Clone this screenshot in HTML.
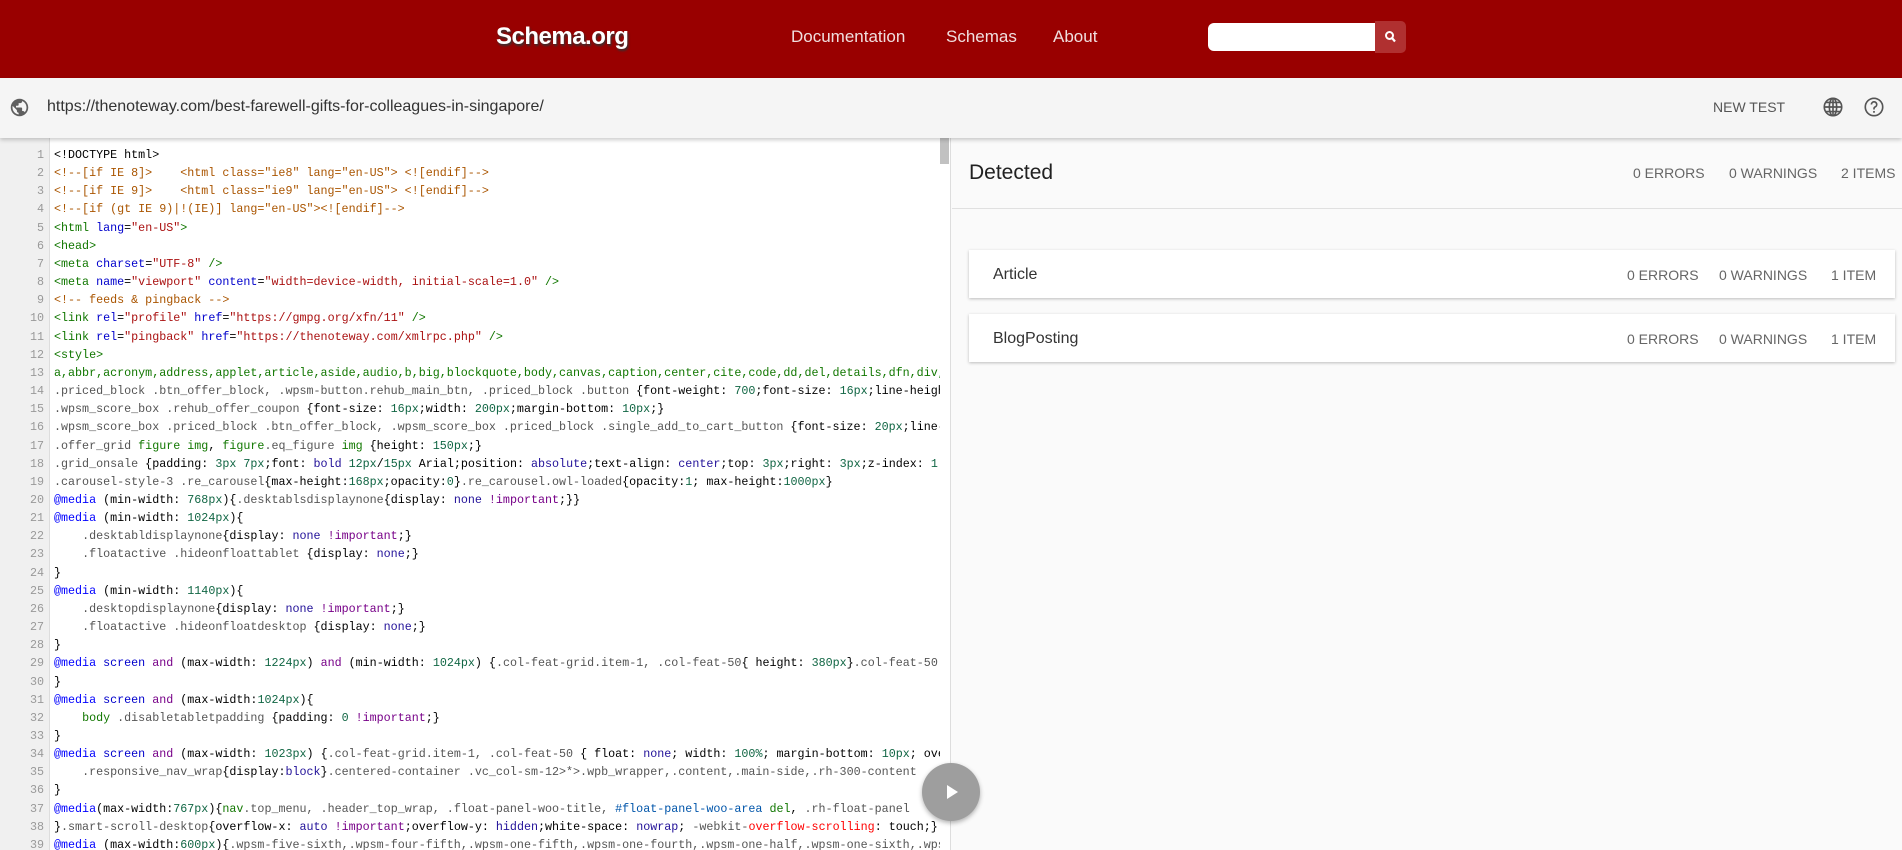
<!DOCTYPE html>
<html><head><meta charset="utf-8">
<style>
*{margin:0;padding:0;box-sizing:border-box}
body{width:1902px;height:850px;overflow:hidden;background:#fafafa;font-family:"Liberation Sans",Arial,sans-serif;position:relative}
.hdr{position:absolute;left:0;top:0;width:1902px;height:78px;background:#990000}
.logo{position:absolute;left:496px;top:23px;font-size:24px;font-weight:bold;color:#fff;letter-spacing:-0.5px;text-shadow:1px 2px 2px #333}
.nav{position:absolute;top:27px;font-size:17px;color:#f0dede}
.search{position:absolute;left:1208px;top:23px;width:168px;height:28px;background:#fff;border-radius:6px 0 0 6px}
.sbtn{position:absolute;left:1375px;top:21px;width:31px;height:32px;background:#b03030;border-radius:0 5px 5px 0}
.bar{position:absolute;left:0;top:78px;width:1902px;height:60px;background:#f5f5f5;box-shadow:0 2px 4px rgba(0,0,0,.2);z-index:2}
.url{position:absolute;left:47px;top:98px;font-size:16px;color:#333;z-index:3}
.newtest{position:absolute;left:1713px;top:99px;font-size:14px;color:#555;z-index:3}
.code{position:absolute;left:0;top:138px;width:951px;height:712px;background:#fff;overflow:hidden;border-right:1px solid #ddd}
.gut{position:absolute;left:0;top:0;width:50px;height:712px;background:#f0f0f0;border-right:1px solid #ddd}
.lines{position:absolute;left:0;top:8px;font-family:"Liberation Mono",monospace;font-size:11.7px;line-height:18.17px}
.lines>div{height:18.17px;white-space:nowrap;overflow:hidden}
.ln{display:inline-block;width:44px;text-align:right;color:#999}
.cl{display:inline-block;padding-left:10px;width:940px;overflow:hidden;vertical-align:top;color:#000;white-space:pre}
.sb{position:absolute;left:940px;top:0;width:10px;height:712px;background:#fff}
.th{position:absolute;left:940px;top:0;width:9px;height:26px;background:#c1c1c1}
.t{color:#170}.a{color:#00c}.s{color:#a11}.c{color:#a50}.q{color:#555}.n{color:#164}.at{color:#219}.k{color:#708}.d{color:#00f}.e{color:#f00}.p{color:#05a}
.det{position:absolute;left:969px;top:161px;font-size:21px;color:#212121}
.cnt{position:absolute;font-size:14px;color:#666}
.div{position:absolute;left:952px;top:208px;width:950px;height:1px;background:#e0e0e0}
.card{position:absolute;left:969px;width:926px;height:48px;background:#fff;box-shadow:0 1px 3px rgba(0,0,0,.25)}
.ct{position:absolute;left:24px;top:16px;font-size:16px;color:#333}
.play{position:absolute;left:922px;top:763px;width:58px;height:58px;border-radius:50%;background:#9e9e9e;box-shadow:0 2px 5px rgba(0,0,0,.3);z-index:5}
</style></head><body>
<div class="hdr"></div>
<div class="logo">Schema.org</div>
<div class="nav" style="left:791px">Documentation</div>
<div class="nav" style="left:946px">Schemas</div>
<div class="nav" style="left:1053px">About</div>
<div class="search"></div>
<div class="sbtn"><svg width="31" height="32" viewBox="0 0 31 32"><circle cx="14.5" cy="14.5" r="3.5" fill="none" stroke="#fff" stroke-width="2"/><line x1="17" y1="17" x2="20" y2="20.5" stroke="#fff" stroke-width="2.2"/></svg></div>
<div class="bar"></div>
<svg style="position:absolute;left:9px;top:97px;z-index:3" width="21" height="21" viewBox="0 0 24 24"><path fill="#5f5f5f" d="M12 2C6.48 2 2 6.48 2 12s4.48 10 10 10 10-4.48 10-10S17.52 2 12 2zm-1 17.930c-3.95-.49-7-3.85-7-7.93 0-.62.08-1.21.21-1.79L9 15v1c0 1.1.9 2 2 2v1.93zm6.9-2.54c-.26-.81-1-1.390-1.9-1.39h-1v-3c0-.55-.45-1-1-1H8v-2h2c.55 0 1-.45 1-1V7h2c1.1 0 2-.9 2-2v-.41c2.93 1.19 5 4.06 5 7.41 0 2.08-.8 3.970-2.1 5.39z"/></svg>
<div class="url">https://thenoteway.com/best-farewell-gifts-for-colleagues-in-singapore/</div>
<div class="newtest">NEW TEST</div>
<svg style="position:absolute;left:1822px;top:96px;z-index:3" width="22" height="22" viewBox="0 0 24 24"><g fill="none" stroke="#555" stroke-width="1.8"><circle cx="12" cy="12" r="9.5"/><ellipse cx="12" cy="12" rx="4" ry="9.5"/><line x1="2.5" y1="12" x2="21.5" y2="12"/><line x1="12" y1="2.5" x2="12" y2="21.5"/><path d="M4 7h16M4 17h16"/></g></svg>
<svg style="position:absolute;left:1863px;top:96px;z-index:3" width="22" height="22" viewBox="0 0 24 24"><circle cx="12" cy="12" r="9.5" fill="none" stroke="#555" stroke-width="1.8"/><path d="M9.2 9.3a2.9 2.9 0 1 1 4.1 2.6c-.9.4-1.3 1-1.3 2v.8" fill="none" stroke="#555" stroke-width="1.8"/><circle cx="12" cy="17.3" r="1.1" fill="#555"/></svg>

<div class="code">
<div class="gut"></div>
<div class="lines"><div><span class="ln">1</span><span class="cl">&lt;!DOCTYPE html&gt;</span></div><div><span class="ln">2</span><span class="cl c">&lt;!--[if IE 8]&gt;    &lt;html class="ie8" lang="en-US"&gt; &lt;![endif]--&gt;</span></div><div><span class="ln">3</span><span class="cl c">&lt;!--[if IE 9]&gt;    &lt;html class="ie9" lang="en-US"&gt; &lt;![endif]--&gt;</span></div><div><span class="ln">4</span><span class="cl c">&lt;!--[if (gt IE 9)|!(IE)] lang="en-US"&gt;&lt;![endif]--&gt;</span></div><div><span class="ln">5</span><span class="cl"><span class="t">&lt;html</span> <span class="a">lang</span>=<span class="s">"en-US"</span><span class="t">&gt;</span></span></div><div><span class="ln">6</span><span class="cl"><span class="t">&lt;head&gt;</span></span></div><div><span class="ln">7</span><span class="cl"><span class="t">&lt;meta</span> <span class="a">charset</span>=<span class="s">"UTF-8"</span> <span class="t">/&gt;</span></span></div><div><span class="ln">8</span><span class="cl"><span class="t">&lt;meta</span> <span class="a">name</span>=<span class="s">"viewport"</span> <span class="a">content</span>=<span class="s">"width=device-width, initial-scale=1.0"</span> <span class="t">/&gt;</span></span></div><div><span class="ln">9</span><span class="cl c">&lt;!-- feeds &amp; pingback --&gt;</span></div><div><span class="ln">10</span><span class="cl"><span class="t">&lt;link</span> <span class="a">rel</span>=<span class="s">"profile"</span> <span class="a">href</span>=<span class="s">"https://gmpg.org/xfn/11"</span> <span class="t">/&gt;</span></span></div><div><span class="ln">11</span><span class="cl"><span class="t">&lt;link</span> <span class="a">rel</span>=<span class="s">"pingback"</span> <span class="a">href</span>=<span class="s">"https://thenoteway.com/xmlrpc.php"</span> <span class="t">/&gt;</span></span></div><div><span class="ln">12</span><span class="cl"><span class="t">&lt;style&gt;</span></span></div><div><span class="ln">13</span><span class="cl t">a,abbr,acronym,address,applet,article,aside,audio,b,big,blockquote,body,canvas,caption,center,cite,code,dd,del,details,dfn,div,dl,dt,em</span></div><div><span class="ln">14</span><span class="cl"><span class="q">.priced_block .btn_offer_block, .wpsm-button.rehub_main_btn, .priced_block .button</span> {font-weight: <span class="n">700</span>;font-size: <span class="n">16px</span>;line-height: <span class="n">1.2em</span>;}</span></div><div><span class="ln">15</span><span class="cl"><span class="q">.wpsm_score_box .rehub_offer_coupon</span> {font-size: <span class="n">16px</span>;width: <span class="n">200px</span>;margin-bottom: <span class="n">10px</span>;}</span></div><div><span class="ln">16</span><span class="cl"><span class="q">.wpsm_score_box .priced_block .btn_offer_block, .wpsm_score_box .priced_block .single_add_to_cart_button</span> {font-size: <span class="n">20px</span>;line-height: 1</span></div><div><span class="ln">17</span><span class="cl"><span class="q">.offer_grid</span> <span class="t">figure img</span>, <span class="t">figure</span><span class="q">.eq_figure</span> <span class="t">img</span> {height: <span class="n">150px</span>;}</span></div><div><span class="ln">18</span><span class="cl"><span class="q">.grid_onsale</span> {padding: <span class="n">3px 7px</span>;font: <span class="at">bold</span> <span class="n">12px</span>/<span class="n">15px</span> Arial;position: <span class="at">absolute</span>;text-align: <span class="at">center</span>;top: <span class="n">3px</span>;right: <span class="n">3px</span>;z-index: <span class="n">1</span></span></div><div><span class="ln">19</span><span class="cl"><span class="q">.carousel-style-3 .re_carousel</span>{max-height:<span class="n">168px</span>;opacity:<span class="n">0</span>}<span class="q">.re_carousel.owl-loaded</span>{opacity:<span class="n">1</span>; max-height:<span class="n">1000px</span>}</span></div><div><span class="ln">20</span><span class="cl"><span class="d">@media</span> (min-width: <span class="n">768px</span>){<span class="q">.desktablsdisplaynone</span>{display: <span class="at">none</span> <span class="k">!important</span>;}}</span></div><div><span class="ln">21</span><span class="cl"><span class="d">@media</span> (min-width: <span class="n">1024px</span>){</span></div><div><span class="ln">22</span><span class="cl">    <span class="q">.desktabldisplaynone</span>{display: <span class="at">none</span> <span class="k">!important</span>;}</span></div><div><span class="ln">23</span><span class="cl">    <span class="q">.floatactive .hideonfloattablet</span> {display: <span class="at">none</span>;}</span></div><div><span class="ln">24</span><span class="cl">}</span></div><div><span class="ln">25</span><span class="cl"><span class="d">@media</span> (min-width: <span class="n">1140px</span>){</span></div><div><span class="ln">26</span><span class="cl">    <span class="q">.desktopdisplaynone</span>{display: <span class="at">none</span> <span class="k">!important</span>;}</span></div><div><span class="ln">27</span><span class="cl">    <span class="q">.floatactive .hideonfloatdesktop</span> {display: <span class="at">none</span>;}</span></div><div><span class="ln">28</span><span class="cl">}</span></div><div><span class="ln">29</span><span class="cl"><span class="d">@media</span> <span class="a">screen</span> <span class="k">and</span> (max-width: <span class="n">1224px</span>) <span class="k">and</span> (min-width: <span class="n">1024px</span>) {<span class="q">.col-feat-grid.item-1, .col-feat-50</span>{ height: <span class="n">380px</span>}<span class="q">.col-feat-50</span></span></div><div><span class="ln">30</span><span class="cl">}</span></div><div><span class="ln">31</span><span class="cl"><span class="d">@media</span> <span class="a">screen</span> <span class="k">and</span> (max-width:<span class="n">1024px</span>){</span></div><div><span class="ln">32</span><span class="cl">    <span class="t">body</span> <span class="q">.disabletabletpadding</span> {padding: <span class="n">0</span> <span class="k">!important</span>;}</span></div><div><span class="ln">33</span><span class="cl">}</span></div><div><span class="ln">34</span><span class="cl"><span class="d">@media</span> <span class="a">screen</span> <span class="k">and</span> (max-width: <span class="n">1023px</span>) {<span class="q">.col-feat-grid.item-1, .col-feat-50</span> { float: <span class="at">none</span>; width: <span class="n">100%</span>; margin-bottom: <span class="n">10px</span>; overflow</span></div><div><span class="ln">35</span><span class="cl">    <span class="q">.responsive_nav_wrap</span>{display:<span class="at">block</span>}<span class="q">.centered-container .vc_col-sm-12&gt;*&gt;.wpb_wrapper,.content,.main-side,.rh-300-content</span></span></div><div><span class="ln">36</span><span class="cl">}</span></div><div><span class="ln">37</span><span class="cl"><span class="d">@media</span>(max-width:<span class="n">767px</span>){<span class="t">nav</span><span class="q">.top_menu, .header_top_wrap, .float-panel-woo-title,</span> <span class="p">#float-panel-woo-area</span> <span class="t">del</span>, <span class="q">.rh-float-panel</span></span></div><div><span class="ln">38</span><span class="cl">}<span class="q">.smart-scroll-desktop</span>{overflow-x: <span class="at">auto</span> <span class="k">!important</span>;overflow-y: <span class="at">hidden</span>;white-space: <span class="at">nowrap</span>; <span class="q">-webkit-</span><span class="e">overflow-scrolling</span>: touch;}</span></div><div><span class="ln">39</span><span class="cl"><span class="d">@media</span> (max-width:<span class="n">600px</span>){<span class="q">.wpsm-five-sixth,.wpsm-four-fifth,.wpsm-one-fifth,.wpsm-one-fourth,.wpsm-one-half,.wpsm-one-sixth,.wpsm</span></span></div></div>
<div class="sb"></div><div class="th"></div>
</div>
<div class="play"><svg width="58" height="58" viewBox="0 0 58 58"><path d="M25 22L36 29L25 36Z" fill="#fff"/></svg></div>

<div class="det">Detected</div>
<div class="cnt" style="left:1633px;top:165px">0 ERRORS</div>
<div class="cnt" style="left:1729px;top:165px">0 WARNINGS</div>
<div class="cnt" style="left:1841px;top:165px">2 ITEMS</div>
<div class="div"></div>
<div class="card" style="top:250px"><div class="ct">Article</div></div>
<div class="card" style="top:314px"><div class="ct">BlogPosting</div></div>
<div class="cnt" style="left:1627px;top:267px">0 ERRORS</div>
<div class="cnt" style="left:1719px;top:267px">0 WARNINGS</div>
<div class="cnt" style="left:1831px;top:267px">1 ITEM</div>
<div class="cnt" style="left:1627px;top:331px">0 ERRORS</div>
<div class="cnt" style="left:1719px;top:331px">0 WARNINGS</div>
<div class="cnt" style="left:1831px;top:331px">1 ITEM</div>
</body></html>
